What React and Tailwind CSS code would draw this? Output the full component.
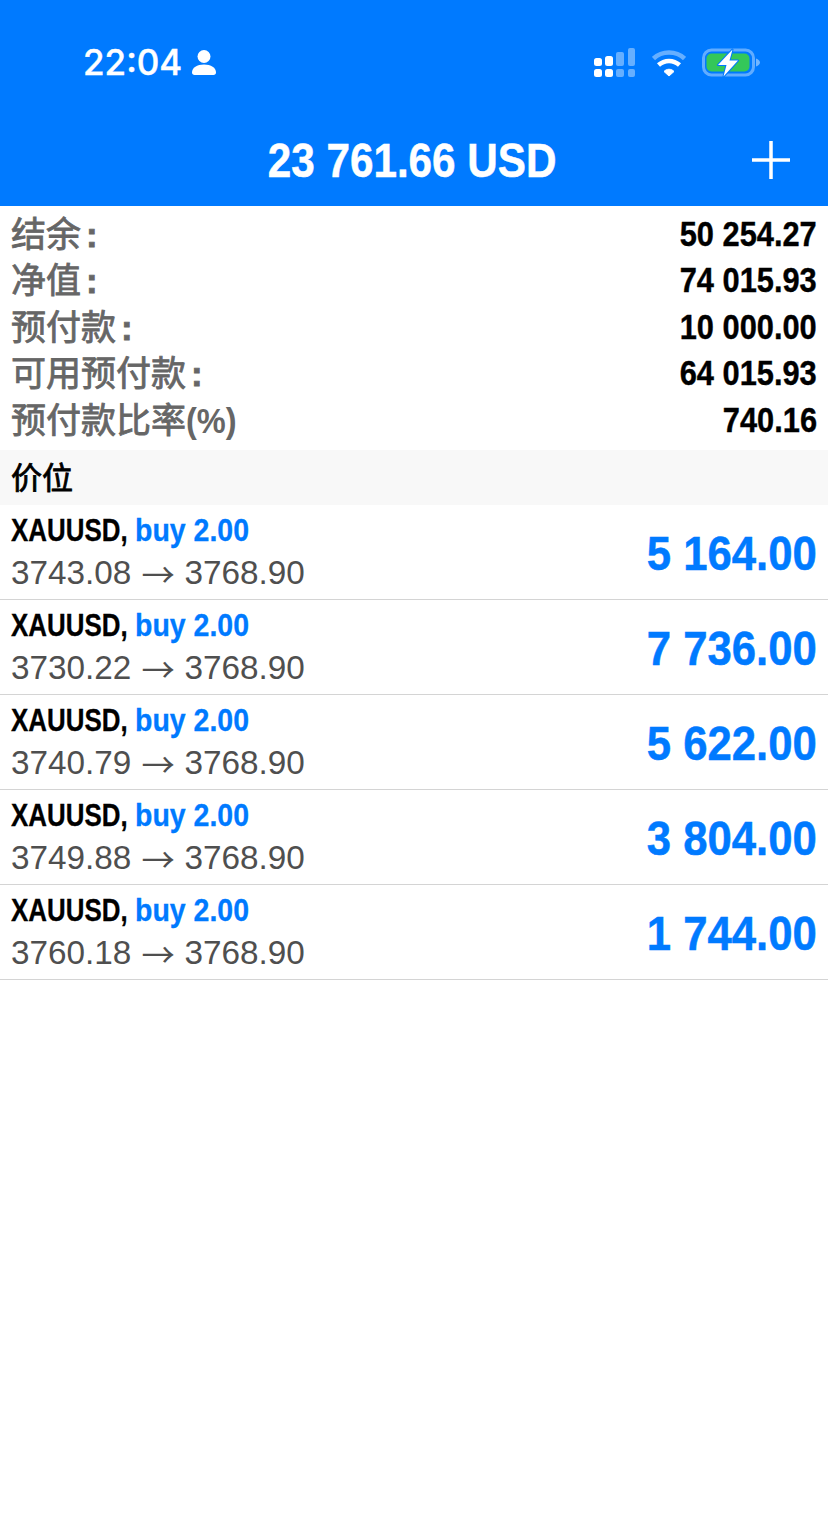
const summary = [
  { label: '结余', value: '50 254.27', colon: true },
  { label: '净值', value: '74 015.93', colon: true },
  { label: '预付款', value: '10 000.00', colon: true },
  { label: '可用预付款', value: '64 015.93', colon: true },
  { label: '预付款比率', value: '740.16', unit: '(%)' },
];

const positions = [
  { open: '3743.08', profit: '5 164.00' },
  { open: '3730.22', profit: '7 736.00' },
  { open: '3740.79', profit: '5 622.00' },
  { open: '3749.88', profit: '3 804.00' },
  { open: '3760.18', profit: '1 744.00' },
];

const cjk = "font-['Liberation_Sans','Noto_Sans_CJK_SC',sans-serif]";

function PersonIcon() {
  return (
    <svg width="26" height="28" viewBox="0 0 26 28" fill="white">
      <circle cx="13" cy="7.500" r="6.500" />
      <path d="M1 23.500C1 18.500 6 15.500 13 15.500S25 18.500 25 23.500C25 25 24 26 22.500 26H3.500C2 26 1 25 1 23.500Z" />
    </svg>
  );
}

function SignalIcon() {
  return (
    <svg width="42" height="30" viewBox="0 0 42 30" fill="white">
      <rect x="0" y="10" width="8" height="8" rx="2.500" />
      <rect x="11" y="8" width="8" height="10" rx="2.500" />
      <rect x="0" y="21" width="8" height="8" rx="2.500" />
      <rect x="11" y="21" width="8" height="8" rx="2.500" />
      <g fillOpacity="0.4">
        <rect x="22" y="4" width="8" height="14" rx="2" />
        <rect x="34" y="0" width="7" height="18" rx="2" />
        <rect x="22" y="21" width="8" height="8" rx="2" />
        <rect x="34" y="21" width="7" height="8" rx="2" />
      </g>
    </svg>
  );
}

function WifiIcon() {
  return (
    <svg width="34" height="28" viewBox="0 0 34 28" fill="none" stroke="white">
      <path d="M1.500 9.500C10 1.500 24 1.500 32.500 9.500" strokeWidth="4.500" strokeOpacity="0.4" />
      <path d="M6.500 16C12.500 10.500 21.500 10.500 27.500 16" strokeWidth="4.500" />
      <path d="M12 22.500L17 27L22 22.500C19.500 19.500 14.500 19.500 12 22.500Z" fill="white" strokeWidth="1" />
    </svg>
  );
}

function BatteryIcon() {
  return (
    <svg width="58" height="30" viewBox="0 0 58 30">
      <rect x="1.500" y="2" width="50" height="25" rx="8" fill="none" stroke="white" strokeOpacity="0.38" strokeWidth="3" />
      <rect x="4.500" y="5.500" width="43" height="18" rx="5" fill="#34c759" />
      <path d="M54 10.500C56.500 11.500 58 13 58 14.500S56.500 17.500 54 18.500Z" fill="white" fillOpacity="0.45" />
      {/* charging bolt with a cut-out edge in the header blue */}
      <path
        d="M30.500 1.500L16 17H24.500L21.500 28.500L36 12.500H27.500Z"
        fill="white"
        stroke="#007aff"
        strokeWidth="2"
        strokeLinejoin="round"
        paintOrder="stroke"
      />
    </svg>
  );
}

function PlusIcon() {
  return (
    <svg width="40" height="40" viewBox="0 0 40 40" stroke="white" strokeWidth="3.500">
      <path d="M20 1V39M1 20H39" />
    </svg>
  );
}

function PositionRow({ open, profit }) {
  return (
    <div className="flex h-[95px] items-center justify-between border-b border-[#d4d4d4] px-[11px]">
      <div className="-mt-[3px]">
        <div className="flex h-[44px] whitespace-nowrap text-[32px] font-bold leading-[46px] [-webkit-text-stroke:0.3px]">
          <span className="w-[124px] origin-left scale-x-[0.81] text-black">XAUUSD,</span>
          <span className="origin-left scale-x-[0.89] text-[#007aff]">buy 2.00</span>
        </div>
        <div className="flex h-[44px] items-center whitespace-nowrap pt-[1px] text-[33.300px] leading-[44px] text-[#4f4f4f]">
          {open}
          <span className="mx-[10px] w-[33px] font-['Noto_Sans_CJK_SC',sans-serif]">→</span>
          3768.90
        </div>
      </div>
      <div className="origin-right scale-x-[0.91] whitespace-nowrap pt-[3px] text-[48px] font-bold text-[#007aff] [-webkit-text-stroke:0.5px]">{profit}</div>
    </div>
  );
}

export default function App() {
  return (
    <div className={`min-h-[1526px] bg-white ${cjk}`}>
      <header className="flex h-[206px] flex-col bg-[#007aff] text-white">
        <div className="flex h-[126px] items-center justify-between pb-[1px] pl-[83px] pr-[68px]">
          <div className="flex items-center gap-[9px]">
            <span className="font-['Inter',sans-serif] text-[35px] font-medium leading-none [-webkit-text-stroke:0.4px]">22:04</span>
            <PersonIcon />
          </div>
          <div className="flex items-center gap-[16px]">
            <SignalIcon />
            <WifiIcon />
            <BatteryIcon />
          </div>
        </div>
        <div className="relative flex flex-1 items-center justify-center pb-[11px] pr-[3px]">
          <span className="scale-x-[0.88] whitespace-nowrap text-[48px] font-bold leading-none [-webkit-text-stroke:0.5px]">23 761.66 USD</span>
          <div className="absolute right-[37px] top-[14px]">
            <PlusIcon />
          </div>
        </div>
      </header>

      <section className="flex h-[244px] flex-col pb-[7px] pt-[5px]">
        {summary.map(({ label, value, colon, unit }) => (
          <div key={label} className="flex h-[46.400px] items-center justify-between px-[11px]">
            <span className="flex items-center whitespace-nowrap pt-[2px] text-[35px] text-[#666666] [-webkit-text-stroke:0.8px]">
              {label}
              {colon && <span className="ml-[5px] font-bold">:</span>}
              {unit && <span className="origin-left scale-x-[0.93] font-bold [-webkit-text-stroke:0]">{unit}</span>}
            </span>
            <span className="origin-right scale-x-[0.88] whitespace-nowrap text-[35px] font-bold text-black [-webkit-text-stroke:0.4px]">{value}</span>
          </div>
        ))}
      </section>

      <div className="flex h-[55px] items-center bg-[#f8f8f8] px-[11px] pt-[3px] text-[31px] text-black [-webkit-text-stroke:0.8px]">价位</div>

      <section>
        {positions.map((p) => (
          <PositionRow key={p.open} open={p.open} profit={p.profit} />
        ))}
      </section>
    </div>
  );
}
